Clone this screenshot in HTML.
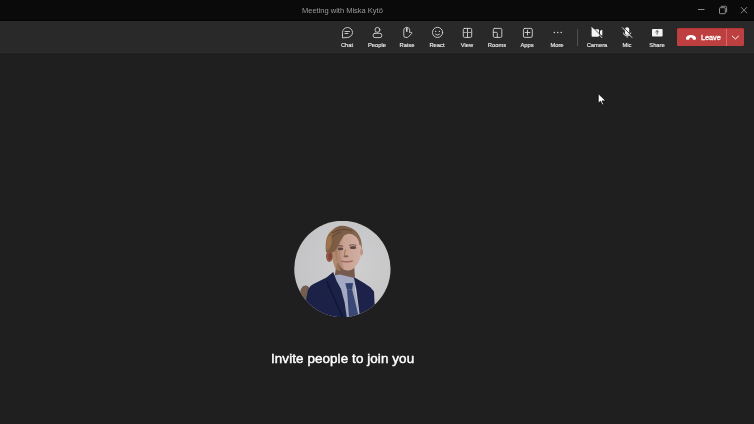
<!DOCTYPE html>
<html><head><meta charset="utf-8">
<style>
html,body{margin:0;padding:0;}
body{-webkit-font-smoothing:antialiased;width:754px;height:424px;overflow:hidden;background:#1f1f1f;position:relative;font-family:"Liberation Sans",sans-serif;}
#title{position:absolute;left:0;top:0;width:754px;height:21px;background:#0a0a0a;}
#title .t{will-change:transform;position:absolute;left:302px;top:6px;font-size:7.5px;color:#9a9a9a;white-space:nowrap;line-height:10px;}
#tool{position:absolute;left:0;top:21px;width:754px;height:32px;background:#292929;}
.lbl{will-change:transform;position:absolute;top:40.5px;width:30px;margin-left:-0.4px;text-align:center;font-size:5.8px;line-height:8px;color:#f2f2f2;-webkit-text-stroke:0.12px #f2f2f2;white-space:nowrap;}
svg{position:absolute;overflow:visible;}
#invite{will-change:transform;position:absolute;left:271px;top:350.2px;font-size:13.4px;letter-spacing:0.1px;font-weight:normal;-webkit-text-stroke:0.45px #fff;color:#ffffff;white-space:nowrap;line-height:18px;}
</style></head>
<body>
<div id="title"><div class="t">Meeting with Miska Kytö</div></div>
<div id="tool"></div>
<div style="position:absolute;left:0;top:20px;width:754px;height:1px;background:#050505"></div>
<div style="position:absolute;left:0;top:52px;width:754px;height:1px;background:#2c2c2c"></div>

<!-- window controls -->
<svg style="left:0;top:0" width="754" height="21">
  <g stroke="#9a9a9a" stroke-width="0.9" fill="none">
    <line x1="698" y1="9.5" x2="704.5" y2="9.5"/>
    <rect x="719.5" y="7.7" width="5.8" height="6" rx="0.7"/>
    <path d="M720.8 6.3 H725.6 Q726.6 6.3 726.6 7.3 V12.3"/>
    <line x1="741" y1="7.2" x2="747" y2="13.2"/>
    <line x1="747" y1="7.2" x2="741" y2="13.2"/>
  </g>
</svg>

<!-- toolbar icons -->
<svg style="left:0;top:0" width="754" height="60">
  <g stroke="#dedede" stroke-width="0.85" fill="none" stroke-linecap="round" stroke-linejoin="round">
    <!-- chat -->
    <path d="M342.5 37.5 V32.5 A5 5 0 1 1 347.5 37.5 Z"/>
    <line x1="345" y1="31.5" x2="349.5" y2="31.5"/>
    <line x1="345" y1="33.5" x2="348" y2="33.5"/>
    <!-- people -->
    <circle cx="377.45" cy="29.85" r="2.45"/>
    <rect x="373.1" y="33.3" width="8.7" height="4.3" rx="1.9"/>
    <!-- raise hand -->
    <path d="M403.8 29.6 Q403.8 28.4 405 28.1 Q405.5 27.3 406.8 27.3 Q408.1 27.3 408.6 28.1 Q409.6 28.4 409.6 29.6 V32.6 L410.8 32.3 Q412.1 32.2 411.8 33.4 L408.4 36.9 Q408 37.4 407.4 37.4 H405.2 Q403.8 37.4 403.8 36 Z"/>
    <line x1="406.8" y1="28.2" x2="406.8" y2="31.3" stroke-width="1.5"/>
    <!-- react -->
    <circle cx="437.55" cy="32.4" r="5.1"/>
    <path d="M435.6 34.3 Q437.55 36.1 439.5 34.3"/>
    <circle cx="435.7" cy="31.4" r="0.6" fill="#dedede" stroke="none"/>
    <circle cx="439.35" cy="31.4" r="0.6" fill="#dedede" stroke="none"/>
    <!-- view -->
    <rect x="463.3" y="28.4" width="8.4" height="9" rx="1.2"/>
    <line x1="467.5" y1="28.4" x2="467.5" y2="37.4"/>
    <line x1="463.3" y1="32.5" x2="471.7" y2="32.5" stroke="#b0b0b0"/>
    <!-- rooms -->
    <rect x="493.3" y="28.4" width="8.5" height="9" rx="1.2"/>
    <path d="M493.3 32.3 H496.3 Q497.3 32.3 497.3 33.3 V37.4"/>
    <!-- apps -->
    <rect x="523.4" y="28.4" width="8.9" height="9" rx="1.4"/>
    <line x1="527.5" y1="30.2" x2="527.5" y2="35"/>
    <line x1="525.1" y1="32.5" x2="529.9" y2="32.5"/>
  </g>
  <g fill="#d8d8d8">
    <!-- more -->
    <circle cx="554.4" cy="32.6" r="0.75"/>
    <circle cx="557.8" cy="32.6" r="0.75"/>
    <circle cx="561.2" cy="32.6" r="0.75"/>
  </g>
  <!-- divider -->
  <line x1="577.6" y1="29.2" x2="577.6" y2="45.9" stroke="#606060" stroke-width="0.8"/>
  <g fill="#f4f4f4">
    <!-- camera off -->
    <path d="M591.6 27.4 L594 29.3 H598 Q599 29.3 599 30.3 V35.8 Q599 36.8 598 36.8 H592.6 Q591.6 36.8 591.6 35.8 Z"/>
    <path d="M600 31 L601.4 29.9 Q602.3 29.5 602.3 30.5 V35 Q602.3 36 601.4 35.5 L600 34.5 Z"/>
    <line x1="592.8" y1="27.4" x2="602.8" y2="37.4" stroke="#292929" stroke-width="1"/>
    <line x1="591.9" y1="27.5" x2="602" y2="37.7" stroke="#f4f4f4" stroke-width="0.9" stroke-linecap="round"/>
    <!-- mic off -->
    <path d="M625 29.2 Q625 27.3 627.1 27.3 Q629.2 27.3 629.2 29.2 V33 Q629.2 35 627.1 35 Q625 35 625 33 Z"/>
    <path d="M623.4 32.6 Q623.4 35.8 627.1 35.8 Q630.8 35.8 630.8 32.6" fill="none" stroke="#f4f4f4" stroke-width="0.85"/>
    <line x1="627.1" y1="35.8" x2="627.1" y2="37.6" stroke="#f4f4f4" stroke-width="0.85"/>
    <line x1="623.2" y1="27.3" x2="632.8" y2="37.1" stroke="#292929" stroke-width="1"/>
    <line x1="622.4" y1="27.7" x2="631.9" y2="37.5" stroke="#f4f4f4" stroke-width="0.9" stroke-linecap="round"/>
    <!-- share -->
    <rect x="652" y="28.9" width="10.6" height="7.7" rx="0.8"/>
    <path d="M657.15 34.6 V30.6 M655.5 32.1 L657.15 30.5 L658.8 32.1" stroke="#555" stroke-width="0.95" fill="none"/>
  </g>
</svg>

<div class="lbl" style="left:332.5px">Chat</div>
<div class="lbl" style="left:362.5px">People</div>
<div class="lbl" style="left:392.5px">Raise</div>
<div class="lbl" style="left:422.5px">React</div>
<div class="lbl" style="left:452.5px">View</div>
<div class="lbl" style="left:482.5px">Rooms</div>
<div class="lbl" style="left:512.5px">Apps</div>
<div class="lbl" style="left:542.5px">More</div>
<div class="lbl" style="left:582.5px">Camera</div>
<div class="lbl" style="left:612.5px">Mic</div>
<div class="lbl" style="left:642.5px">Share</div>

<!-- leave button -->
<div style="position:absolute;left:677px;top:28px;width:67px;height:18px;background:#be3f3f;border-radius:1.5px;box-shadow:inset 0 0.6px 0 #a52a2a;"></div>
<div style="position:absolute;left:726.2px;top:29px;width:0.8px;height:17px;background:#d46a6a;"></div>
<div style="will-change:transform;position:absolute;left:700.5px;top:33px;font-size:7.4px;letter-spacing:-0.1px;font-weight:normal;-webkit-text-stroke:0.3px #fff;color:#fff;line-height:10px;">Leave</div>
<svg style="left:0;top:0" width="754" height="60">
  <path d="M686 39.1 Q685.8 36.9 687.2 35.9 Q691 34.2 694.8 35.9 Q696.2 36.9 696 39.1 Q695.9 39.8 695.2 39.8 L693.4 39.8 Q692.7 39.8 692.6 39.1 L692.4 37.9 Q691 37.3 689.6 37.9 L689.4 39.1 Q689.3 39.8 688.6 39.8 L686.8 39.8 Q686.1 39.8 686 39.1 Z" fill="#fff"/>
  <path d="M732 35.8 L735.4 39 L738.8 35.8" stroke="#fff" stroke-width="1" fill="none"/>
</svg>

<!-- avatar -->
<svg style="left:294px;top:221px" width="97" height="97" viewBox="0 0 97 97">
  <defs>
    <clipPath id="cc"><circle cx="48.4" cy="47.9" r="48.15"/></clipPath>
    <radialGradient id="bg" cx="0.6" cy="0.45" r="0.65">
      <stop offset="0" stop-color="#d0cfd0"/>
      <stop offset="1" stop-color="#c3c2c4"/>
    </radialGradient>
    <linearGradient id="hairg" x1="0" y1="0" x2="1" y2="0.3">
      <stop offset="0" stop-color="#a97848"/>
      <stop offset="0.35" stop-color="#7a5a42"/>
      <stop offset="1" stop-color="#82664f"/>
    </linearGradient>
    <linearGradient id="faceg" x1="0" y1="0" x2="1" y2="0">
      <stop offset="0" stop-color="#b58872"/>
      <stop offset="0.35" stop-color="#c8a293"/>
      <stop offset="1" stop-color="#d2b0a4"/>
    </linearGradient>
    <filter id="bl" x="-10%" y="-10%" width="120%" height="120%"><feGaussianBlur stdDeviation="0.7"/></filter>
  </defs>
  <g clip-path="url(#cc)">
    <rect width="97" height="97" fill="url(#bg)"/>
    <g filter="url(#bl)">
    <!-- background blob left -->
    <ellipse cx="11.5" cy="72.5" rx="5.5" ry="8" fill="#5e4a40" opacity="0.85"/>
    <ellipse cx="10" cy="70" rx="2.5" ry="4" fill="#7e5e48" opacity="0.7"/>
    <!-- neck -->
    <path d="M43 42 L60 42 L61 58 L40 58 Z" fill="#765a4e"/>
    <!-- face -->
    <path d="M41 24 C40 35 43.5 45 50 48.8 C53 50.2 57 49.8 60 47 C64.5 42.5 67.5 36 67.8 28 C67.8 20 63 13 56 12.6 C48 12.6 42 17 41 24 Z" fill="url(#faceg)"/>
    <ellipse cx="67.6" cy="31" rx="1.4" ry="3.6" fill="#c0948a"/>
    <!-- left face shading -->
    <path d="M41 24 C40 35 43.5 45 50 48.8 L48 42 C46 35 45.5 28 46.5 22 Z" fill="#a27a64" opacity="0.45"/>
    <!-- sideburn / cheek shading -->
    <path d="M37.5 27 L43 28 C42.5 35 43.5 43 47 50 L42 49 C38.5 42 37 33 37.5 27 Z" fill="#a67b58" opacity="0.8"/>
    <!-- ear -->
    <ellipse cx="35.4" cy="35.2" rx="3.4" ry="5.8" fill="#94584a"/>
    <ellipse cx="36" cy="35.5" rx="1.6" ry="3.5" fill="#7a4438"/>
    <!-- brows & eyes -->
    <path d="M42.8 25.2 Q46 24 49.2 25.4" stroke="#7a5a4c" stroke-width="1.1" fill="none"/>
    <path d="M55 24.4 Q58.6 23 62.4 24.6" stroke="#7a5a4c" stroke-width="1.1" fill="none"/>
    <ellipse cx="46.5" cy="27.9" rx="2.8" ry="1.4" fill="#5e4642"/>
    <ellipse cx="59" cy="26.4" rx="3.2" ry="1.5" fill="#5e4642"/>
    <!-- nose -->
    <path d="M51.5 28.5 Q50.5 32 50.5 34.5" stroke="#a87a68" stroke-width="1.2" fill="none"/>
    <ellipse cx="52" cy="35.3" rx="2.6" ry="1.1" fill="#86604f"/>
    <!-- mouth -->
    <path d="M47.2 40 Q53 41.8 58.8 39.8" stroke="#9a605a" stroke-width="1.3" fill="none"/>
    <!-- hair -->
    <path d="M32 31 C31 21 32.5 14 37 10.2 C40 7.5 43 5.2 46.5 4.8 C51.5 4.4 56.5 6 60.8 9.2 C64.5 12.3 67 17 67.6 22.5 L67.9 28 L66.7 24.6 C65.5 20.5 64 17.5 61 15 C59 13.5 57 12.8 55 12.8 C52 13 50 14.5 49 16 C47 19 45 23 42.5 28.1 L40 31 L37.5 31.5 Z" fill="url(#hairg)"/>
    <path d="M38 12 C44 8 52 7.5 58 10" stroke="#64493a" stroke-width="1.2" fill="none"/>
    <path d="M36 20 C38 15 42 12 47 11" stroke="#66483a" stroke-width="1.1" fill="none"/>
    <path d="M60 12 C63.5 15 65.5 19 66 24" stroke="#8a6a55" stroke-width="1" fill="none"/>
    <ellipse cx="35" cy="22" rx="2.6" ry="7.5" fill="#a27a50" opacity="0.75" transform="rotate(12 35 22)"/>
    <!-- shirt -->
    <path d="M39.8 54.5 L46 53.5 L60.2 57 L61.1 69 L67 104 L49 104 Z" fill="#a4aac4"/>
    <!-- tie -->
    <path d="M51.2 62.3 L59 62 L58.2 68.7 L53 68.7 Z" fill="#33426e"/>
    <path d="M53 68.7 L58.2 68.7 L64.2 93.5 L65 104 L55 104 L54.8 94 Z" fill="#3a4674"/>
    <!-- suit left -->
    <path d="M-10 104 L4 86 L12 79 L14 69 L16.5 65 L19.5 62.9 L32.5 56.4 L39.2 51 L42.7 60.2 L47 68 L50.5 81 L54 104 Z" fill="#1b2246"/>
    <path d="M32.8 60.2 L37 70.3 L44.5 87 L48.5 96" stroke="#0e1434" stroke-width="1.2" fill="none"/>
    <!-- suit right -->
    <path d="M59.9 56.8 L61.5 57 L70 62 L76.3 66.2 L80 70.5 L80.6 83 L90 104 L67 104 L62.4 69 Z" fill="#1c2448"/>
    </g>
  </g>
</svg>

<div id="invite">Invite people to join you</div>

<!-- cursor -->
<svg style="left:597px;top:92px" width="12" height="14">
  <path d="M1.2 1.6 L1.2 11.3 L3.5 9.3 L5.2 12.9 L6.7 12.3 L5.1 8.9 L8.9 8.9 Z" fill="#fff" stroke="#000" stroke-width="0.8" stroke-linejoin="round"/>
</svg>
</body></html>
